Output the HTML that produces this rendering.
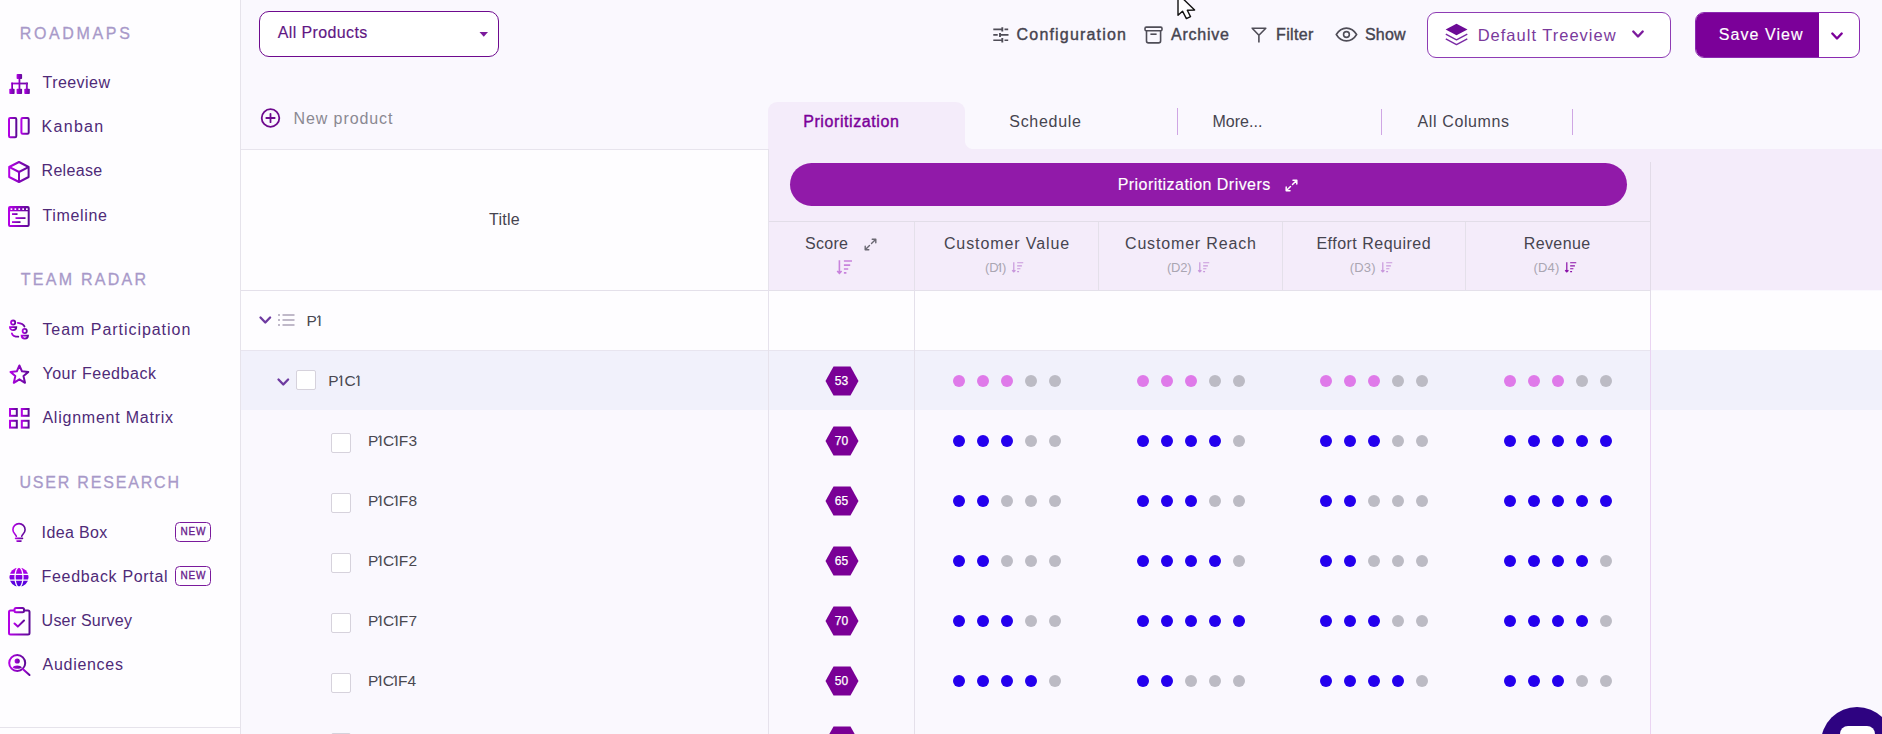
<!DOCTYPE html>
<html><head><meta charset="utf-8">
<style>
html,body{margin:0;padding:0;width:1882px;height:734px;overflow:hidden;}
body{background:#faf8fe;font-family:"Liberation Sans",sans-serif;position:relative;}
.a{position:absolute;}
.t{position:absolute;white-space:nowrap;line-height:1;font-family:"Liberation Sans",sans-serif;}
svg{position:absolute;overflow:visible;}
.hl{position:absolute;height:1px;background:#e7e4ed;}
.vl{position:absolute;width:1px;background:#e5e2ea;}
.cb{position:absolute;width:18px;height:18px;border:1px solid #d6d2dc;border-radius:2px;background:#fff;}
.one{position:relative;}
.one::before{content:'';position:absolute;left:-0.5px;top:0.27em;width:2.9px;height:1.3px;background:currentColor;transform:rotate(-45deg);}
.dot{position:absolute;width:12px;height:12px;border-radius:50%;}
</style></head><body>
<svg width="0" height="0" style="position:absolute">
<defs>
<linearGradient id="g" x1="0" y1="0" x2="1" y2="0"><stop offset="0" stop-color="#b400e6"/><stop offset="1" stop-color="#5e0a96"/></linearGradient>
<linearGradient id="gv" x1="0" y1="0" x2="0" y2="1"><stop offset="0" stop-color="#c400e6"/><stop offset="1" stop-color="#4200dc"/></linearGradient>
</defs></svg>

<!-- sidebar -->
<div class="a" style="left:0;top:0;width:240px;height:734px;background:#fefdff;"></div>
<div class="vl" style="left:240px;top:0;height:734px;background:#e6e3eb;"></div>
<div class="hl" style="left:0;top:727px;width:240px;background:#e6e3eb;"></div>

<!-- Treeview icon -->
<svg style="left:9px;top:74px" width="21" height="20" viewBox="0 0 21 20">
<g fill="url(#g)"><rect x="7.6" y="0" width="5.5" height="5" rx="0.8"/><rect x="0.3" y="14.7" width="5.3" height="5.3" rx="0.8"/><rect x="7.6" y="14.7" width="5.5" height="5.3" rx="0.8"/><rect x="15.3" y="14.7" width="5.5" height="5.3" rx="0.8"/>
<rect x="9.5" y="4" width="1.8" height="11"/><rect x="2.2" y="8.6" width="16.6" height="1.8"/><rect x="2.2" y="8.6" width="1.8" height="7"/><rect x="16.9" y="8.6" width="1.8" height="7"/></g>
</svg>
<!-- Kanban icon -->
<svg style="left:8px;top:117px" width="22" height="22" viewBox="0 0 22 22">
<g fill="none" stroke="url(#g)" stroke-width="2"><rect x="1" y="1" width="7.3" height="19.3" rx="1.2"/><rect x="13.4" y="1" width="7.3" height="15.7" rx="1.2"/></g>
</svg>
<!-- Release cube -->
<svg style="left:8px;top:161px" width="22" height="22" viewBox="0 0 22 22">
<g fill="none" stroke="url(#g)" stroke-width="2" stroke-linejoin="round"><path d="M11 1 L20.6 6 V16 L11 21 L1.2 16 V6 Z"/><path d="M1.5 6.2 L11 11 L20.4 6.2 M11 11 V20.6"/></g>
</svg>
<!-- Timeline -->
<svg style="left:8px;top:206px" width="22" height="21" viewBox="0 0 22 21">
<g fill="none" stroke="url(#g)" stroke-width="2"><rect x="1" y="1" width="19.7" height="19" rx="1"/></g>
<g fill="url(#g)"><rect x="1" y="1" width="19.7" height="4.3"/><rect x="4" y="7.2" width="5.5" height="1.8"/><rect x="7.5" y="11.2" width="10" height="1.8"/><rect x="4" y="15.2" width="8.5" height="1.8"/></g>
<g fill="#fefdff"><rect x="2.6" y="2.3" width="1.7" height="1.7"/><rect x="6.5" y="2.3" width="1.7" height="1.7"/><rect x="10.4" y="2.3" width="1.7" height="1.7"/><rect x="14.3" y="2.3" width="1.7" height="1.7"/><rect x="18" y="2.3" width="1.7" height="1.7"/></g>
</svg>
<!-- Team participation -->
<svg style="left:4px;top:310px" width="30" height="35" viewBox="0 0 30 35">
<g fill="none" stroke="url(#g)" stroke-width="1.8" stroke-linecap="round"><circle cx="9.1" cy="12.6" r="2.1"/><path d="M5.9 17.1 H12.3 C12.3 19.1 10.6 20.1 9.1 20.1 C7.6 20.1 5.9 19.1 5.9 17.1 Z"/><circle cx="20.7" cy="21" r="2.1"/><path d="M17.6 25.6 H24 C24 27.6 22.3 28.6 20.8 28.6 C19.3 28.6 17.6 27.6 17.6 25.6Z"/><path d="M13.8 12.9 C16.5 13.2 19.5 14.5 20.5 16.5"/><path d="M7.9 23.4 C8.5 25.5 11 26.7 14.3 26.7"/></g>
</svg>
<!-- Star -->
<svg style="left:9px;top:364px" width="21" height="21" viewBox="0 0 21 21">
<path fill="none" stroke="url(#g)" stroke-width="2" stroke-linejoin="round" d="M10.4 1.5 L13 7.3 L19.3 7.9 L14.5 12.1 L16 18.8 L10.4 15.3 L4.8 18.8 L6.3 12.1 L1.5 7.9 L7.8 7.3 Z"/>
</svg>
<!-- Grid -->
<svg style="left:9px;top:408px" width="21" height="21" viewBox="0 0 21 21">
<g fill="none" stroke="url(#g)" stroke-width="2"><rect x="1" y="1" width="6.8" height="6.8"/><rect x="12.8" y="1" width="6.8" height="6.8"/><rect x="1" y="12.8" width="6.8" height="6.8"/><rect x="12.8" y="12.8" width="6.8" height="6.8"/></g>
</svg>
<!-- Bulb -->
<svg style="left:6px;top:520px" width="28" height="26" viewBox="0 0 28 26">
<g fill="none" stroke="url(#g)" stroke-width="1.6" stroke-linecap="round"><path d="M10.3 16.2 C9.6 14.4 6.9 13 6.9 9.7 A6.1 6.1 0 0 1 19.1 9.7 C19.1 13 16.4 14.4 15.7 16.2"/><path d="M9.6 18.4 H16.5 M11 21.1 H15"/></g>
</svg>
<!-- Globe -->
<svg style="left:6px;top:564px" width="26" height="26" viewBox="0 0 26 26">
<circle cx="13" cy="13.1" r="9.6" fill="url(#gv)"/>
<g fill="none" stroke="#fefdff" stroke-width="1.3"><ellipse cx="13" cy="13.1" rx="4" ry="10"/><path d="M2 10.3 H24 M2 16.1 H24"/></g>
</svg>
<!-- Clipboard -->
<svg style="left:8px;top:607px" width="23" height="29" viewBox="0 0 23 29">
<g fill="none" stroke="url(#g)" stroke-width="2" stroke-linejoin="round"><rect x="1" y="3.5" width="20.5" height="24" rx="1.5"/><rect x="6.5" y="1" width="9.5" height="4.3" rx="1.5" fill="#fefdff"/><path d="M6.5 16.5 L9.8 19.6 L16 13.5" stroke-linecap="round"/></g>
</svg>
<!-- Audiences -->
<svg style="left:8px;top:654px" width="23" height="22" viewBox="0 0 23 22">
<g fill="none" stroke="url(#g)" stroke-width="2"><circle cx="9.2" cy="9" r="8"/><path d="M15 15.2 L21.5 21" stroke-linecap="round"/></g>
<g fill="url(#g)"><circle cx="9.2" cy="7" r="2.6"/><path d="M4.5 13.5 C5.5 10.8 12.9 10.8 13.9 13.5 C12.5 15.2 6 15.2 4.5 13.5Z"/></g>
</svg>
<!-- NEW badges -->
<div class="a" style="left:175px;top:522px;width:33.5px;height:17.5px;border:1.3px solid #7a1a9c;border-radius:4.5px;"></div>
<div class="t" style="left:180.5px;top:527px;font-size:10px;font-weight:400;color:#681a8c;letter-spacing:0.8px;-webkit-text-stroke:0.3px #681a8c;">NEW</div>
<div class="a" style="left:175px;top:566px;width:33.5px;height:17.5px;border:1.3px solid #7a1a9c;border-radius:4.5px;"></div>
<div class="t" style="left:180.5px;top:571px;font-size:10px;font-weight:400;color:#681a8c;letter-spacing:0.8px;-webkit-text-stroke:0.3px #681a8c;">NEW</div>

<!-- All products dropdown -->
<div class="a" style="left:259px;top:11px;width:238px;height:44px;border:1.5px solid #6e0a8e;border-radius:10px;background:#fff;"></div>
<svg style="left:479px;top:32px" width="10" height="5" viewBox="0 0 10 5"><path d="M0.5 0 H9 L4.75 4.8Z" fill="#7b1a9c"/></svg>

<!-- toolbar icons -->
<svg style="left:988px;top:22px" width="26" height="26" viewBox="0 0 26 26">
<g stroke="#4f4d57" stroke-width="1.6" fill="none"><path d="M5.3 7.4 H14.3 M16.5 7.4 H20.2 M5.3 12.9 H9.7 M12 12.9 H20.5 M5.3 18.2 H14.3 M16.5 18.2 H20.2"/><path d="M14.3 5.3 V9.6 M12 11 V14.9 M14.3 16.1 V20.4" stroke-width="1.9"/></g>
</svg>
<svg style="left:1140px;top:22px" width="28" height="26" viewBox="0 0 28 26">
<g fill="none" stroke="#4f4d57" stroke-width="1.6" stroke-linejoin="round"><rect x="5" y="5.1" width="17" height="3.7" rx="1.3"/><path d="M6.5 8.8 V19 Q6.5 20.9 8.5 20.9 H18.6 Q20.6 20.9 20.6 19 V8.8"/><path d="M10.4 12.2 H16.6"/></g>
</svg>
<svg style="left:1246px;top:22px" width="26" height="26" viewBox="0 0 26 26">
<g fill="none" stroke="#4f4d57" stroke-width="1.6" stroke-linejoin="round"><path d="M6.2 6.2 H19.8 L12.9 13.3 Z M12.9 13.3 V20.4"/></g>
</svg>
<svg style="left:1332px;top:22px" width="28" height="26" viewBox="0 0 28 26">
<g fill="none" stroke="#4f4d57" stroke-width="1.6"><path d="M4.3 12.5 C7.5 7.2 10.8 6.1 14.45 6.1 C18.1 6.1 21.4 7.2 24.6 12.5 C21.4 17.8 18.1 18.9 14.45 18.9 C10.8 18.9 7.5 17.8 4.3 12.5Z"/><circle cx="14.45" cy="12.5" r="2.9"/></g>
</svg>

<!-- cursor -->
<svg style="left:1177px;top:-7px" width="20" height="28" viewBox="0 0 20 28">
<path d="M1 0.8 L1 22.3 L5.5 18.2 L9.4 25.6 L13.5 23.6 L10.3 17.3 L17.6 17.1 Z" fill="#fff" stroke="#111" stroke-width="1.4" stroke-linejoin="round"/>
</svg>

<!-- Default Treeview -->
<div class="a" style="left:1427px;top:12px;width:242px;height:44px;border:1.2px solid #8e3cb4;border-radius:9px;background:#fff;"></div>
<svg style="left:1445px;top:23px" width="24" height="23" viewBox="0 0 24 23">
<path d="M11.5 0.8 L22.5 6.5 L11.5 12.2 L0.6 6.5 Z" fill="#6c0a96"/>
<g fill="none" stroke="#7a2aa4" stroke-width="1.4" stroke-linejoin="round"><path d="M0.8 11.2 L11.5 16.8 L22.3 11.2"/><path d="M0.8 15.8 L11.5 21.6 L22.3 15.8"/></g>
</svg>
<svg style="left:1632px;top:30px" width="12" height="9" viewBox="0 0 12 9">
<path d="M1.3 1.5 L6 6.5 L10.7 1.5" fill="none" stroke="#7b1a9c" stroke-width="2.4" stroke-linecap="round" stroke-linejoin="round"/>
</svg>

<!-- Save view -->
<div class="a" style="left:1695px;top:12px;width:163px;height:44px;border:1.2px solid #8a2ab0;border-radius:9px;background:#fff;overflow:hidden;">
<div class="a" style="left:0;top:0;width:123px;height:44px;background:#7b0099;"></div>
</div>
<svg style="left:1831px;top:32px" width="12" height="9" viewBox="0 0 12 9">
<path d="M1.3 1.5 L6 6.5 L10.7 1.5" fill="none" stroke="#7b0099" stroke-width="2.4" stroke-linecap="round" stroke-linejoin="round"/>
</svg>

<!-- New product -->
<svg style="left:260px;top:108px" width="21" height="21" viewBox="0 0 21 21">
<g fill="none" stroke="#6e0a8e" stroke-width="1.8" stroke-linecap="round"><circle cx="10.5" cy="10" r="8.8"/><path d="M10.5 5.8 V14.2 M6.3 10 H14.7"/></g>
</svg>

<!-- title column header area -->
<div class="a" style="left:241px;top:149px;width:527px;height:141px;background:#fefdff;"></div>
<div class="hl" style="left:241px;top:149px;width:527px;"></div>

<!-- tabs -->
<div class="a" style="left:768px;top:102px;width:197px;height:60px;background:#f4ecfa;border-radius:9px 9px 0 0;"></div>
<div class="a" style="left:768px;top:149px;width:1114px;height:141px;background:#f4ecfa;"></div>
<div class="a" style="left:965px;top:141px;width:8px;height:8px;background:radial-gradient(circle at 100% 0, #faf8fe 7.5px, #f4ecfa 8.5px);"></div>
<div class="vl" style="left:1177px;top:108px;height:27px;background:#cfa6e4;"></div>
<div class="vl" style="left:1381px;top:109px;height:26px;background:#cfa6e4;"></div>
<div class="vl" style="left:1572px;top:109px;height:26px;background:#cfa6e4;"></div>

<!-- pill -->
<div class="a" style="left:790px;top:163px;width:837px;height:43px;background:#911aa9;border-radius:22px;"></div>
<svg style="left:1285px;top:179px" width="13" height="13" viewBox="0 0 13 13">
<g fill="none" stroke="#fff" stroke-width="1.5" stroke-linecap="round" stroke-linejoin="round"><path d="M7.5 5.5 L11.8 1.2 M8 1.2 H11.8 V5 M5.5 7.5 L1.2 11.8 M1.2 8 V11.8 H5"/></g>
</svg>

<!-- header grid lines -->
<div class="hl" style="left:768px;top:221px;width:882px;background:#e2dde8;"></div>
<div class="vl" style="left:1650px;top:162px;height:572px;background:#e2dbe8;"></div>
<div class="vl" style="left:768px;top:149px;height:585px;background:#e6e2ec;"></div>
<div class="vl" style="left:914px;top:222px;height:512px;background:#e4e0ea;"></div>
<div class="vl" style="left:1098px;top:222px;height:68px;background:#e4e0ea;"></div>
<div class="vl" style="left:1282px;top:222px;height:68px;background:#e4e0ea;"></div>
<div class="vl" style="left:1465px;top:222px;height:68px;background:#e4e0ea;"></div>

<!-- header icons -->
<svg style="left:864px;top:238px" width="13" height="13" viewBox="0 0 13 13">
<g fill="none" stroke="#6a6872" stroke-width="1.4" stroke-linecap="round" stroke-linejoin="round"><path d="M7.5 5.5 L11.8 1.2 M8.2 1.2 H11.8 V4.8 M5.5 7.5 L1.2 11.8 M1.2 8.2 V11.8 H4.8"/></g>
</svg>
<svg style="left:837px;top:260px" width="16" height="14" viewBox="0 0 16 14"><g fill="none" stroke="#c882dc" stroke-width="1.6" stroke-linecap="butt"><path d="M2.4 0.3 V13.3 M0.2 11 L2.4 13.3 L4.6 11 M6.9 1 H15 M6.9 5.1 H13.2 M6.9 9 H11.2 M6.9 12.9 H9.4"/></g></svg>
<svg style="left:1012px;top:262px" width="12" height="10.5" viewBox="0 0 16 14"><g fill="none" stroke="#c898dc" stroke-width="1.6" stroke-linecap="butt"><path d="M2.4 0.3 V13.3 M0.2 11 L2.4 13.3 L4.6 11 M6.9 1 H15 M6.9 5.1 H13.2 M6.9 9 H11.2 M6.9 12.9 H9.4"/></g></svg>
<svg style="left:1198px;top:262px" width="12" height="10.5" viewBox="0 0 16 14"><g fill="none" stroke="#c898dc" stroke-width="1.6" stroke-linecap="butt"><path d="M2.4 0.3 V13.3 M0.2 11 L2.4 13.3 L4.6 11 M6.9 1 H15 M6.9 5.1 H13.2 M6.9 9 H11.2 M6.9 12.9 H9.4"/></g></svg>
<svg style="left:1381px;top:262px" width="12" height="10.5" viewBox="0 0 16 14"><g fill="none" stroke="#c898dc" stroke-width="1.6" stroke-linecap="butt"><path d="M2.4 0.3 V13.3 M0.2 11 L2.4 13.3 L4.6 11 M6.9 1 H15 M6.9 5.1 H13.2 M6.9 9 H11.2 M6.9 12.9 H9.4"/></g></svg>
<svg style="left:1565px;top:262px" width="12" height="10.5" viewBox="0 0 16 14"><g fill="none" stroke="#8a10a8" stroke-width="1.6" stroke-linecap="butt"><path d="M2.4 0.3 V13.3 M0.2 11 L2.4 13.3 L4.6 11 M6.9 1 H15 M6.9 5.1 H13.2 M6.9 9 H11.2 M6.9 12.9 H9.4"/></g></svg>

<!-- rows -->
<div class="hl" style="left:241px;top:290px;width:1409px;background:#e4e0ea;"></div>
<div class="a" style="left:241px;top:291px;width:1641px;height:59px;background:#fefdff;"></div>
<div class="a" style="left:241px;top:350px;width:1641px;height:60px;background:#f1f1fb;"></div>
<div class="hl" style="left:241px;top:350px;width:1409px;background:#e8e5ef;"></div>
<!-- redraw vertical lines over rows -->
<div class="vl" style="left:768px;top:290px;height:444px;background:#e6e2ec;"></div>
<div class="vl" style="left:914px;top:290px;height:444px;background:#e4e0ea;"></div>
<div class="vl" style="left:1650px;top:291px;height:14px;background:#e2dde8;"></div><div class="vl" style="left:1650px;top:305px;height:429px;background:#ead4f2;"></div>

<!-- P1 row -->
<svg style="left:259px;top:316px" width="13" height="9" viewBox="0 0 13 9">
<path d="M1.5 1.5 L6.3 6.5 L11.1 1.5" fill="none" stroke="#6e3aa0" stroke-width="2.3" stroke-linecap="round" stroke-linejoin="round"/>
</svg>
<svg style="left:278px;top:314px" width="18" height="13" viewBox="0 0 18 13">
<g stroke="#c0b9c9" stroke-width="1.8"><path d="M0 1 H2 M0 6 H2 M0 11 H2 M4.5 1 H16.5 M4.5 6 H16.5 M4.5 11 H16.5"/></g>
</svg>
<!-- P1C1 row -->
<svg style="left:277px;top:378px" width="13" height="9" viewBox="0 0 13 9">
<path d="M1.5 1.5 L6.3 6.5 L11.1 1.5" fill="none" stroke="#6e3aa0" stroke-width="2.3" stroke-linecap="round" stroke-linejoin="round"/>
</svg>
<div class="cb" style="left:296px;top:370px;"></div>
<svg style="left:824.5px;top:366px" width="34" height="30" viewBox="0 0 34 30"><polygon points="0.5,15.0 8.5,0.4 25.5,0.4 33.5,15.0 25.5,29.6 8.5,29.6" fill="#7a0096"/></svg>
<div class="t" style="left:821.5px;width:40px;text-align:center;top:375.4px;font-size:12px;color:#fff;-webkit-text-stroke:0.25px #fff;">53</div>
<div class="dot" style="left:953px;top:375px;background:#df7ae9;"></div>
<div class="dot" style="left:977px;top:375px;background:#df7ae9;"></div>
<div class="dot" style="left:1001px;top:375px;background:#df7ae9;"></div>
<div class="dot" style="left:1025px;top:375px;background:#bcbbc4;"></div>
<div class="dot" style="left:1049px;top:375px;background:#bcbbc4;"></div>
<div class="dot" style="left:1137px;top:375px;background:#df7ae9;"></div>
<div class="dot" style="left:1161px;top:375px;background:#df7ae9;"></div>
<div class="dot" style="left:1185px;top:375px;background:#df7ae9;"></div>
<div class="dot" style="left:1209px;top:375px;background:#bcbbc4;"></div>
<div class="dot" style="left:1233px;top:375px;background:#bcbbc4;"></div>
<div class="dot" style="left:1320px;top:375px;background:#df7ae9;"></div>
<div class="dot" style="left:1344px;top:375px;background:#df7ae9;"></div>
<div class="dot" style="left:1368px;top:375px;background:#df7ae9;"></div>
<div class="dot" style="left:1392px;top:375px;background:#bcbbc4;"></div>
<div class="dot" style="left:1416px;top:375px;background:#bcbbc4;"></div>
<div class="dot" style="left:1504px;top:375px;background:#df7ae9;"></div>
<div class="dot" style="left:1528px;top:375px;background:#df7ae9;"></div>
<div class="dot" style="left:1552px;top:375px;background:#df7ae9;"></div>
<div class="dot" style="left:1576px;top:375px;background:#bcbbc4;"></div>
<div class="dot" style="left:1600px;top:375px;background:#bcbbc4;"></div>
<svg style="left:824.5px;top:426px" width="34" height="30" viewBox="0 0 34 30"><polygon points="0.5,15.0 8.5,0.4 25.5,0.4 33.5,15.0 25.5,29.6 8.5,29.6" fill="#7a0096"/></svg>
<div class="t" style="left:821.5px;width:40px;text-align:center;top:435.4px;font-size:12px;color:#fff;-webkit-text-stroke:0.25px #fff;">70</div>
<div class="cb" style="left:331px;top:433px;"></div>
<div class="dot" style="left:953px;top:435px;background:#2400ee;"></div>
<div class="dot" style="left:977px;top:435px;background:#2400ee;"></div>
<div class="dot" style="left:1001px;top:435px;background:#2400ee;"></div>
<div class="dot" style="left:1025px;top:435px;background:#bcbbc4;"></div>
<div class="dot" style="left:1049px;top:435px;background:#bcbbc4;"></div>
<div class="dot" style="left:1137px;top:435px;background:#2400ee;"></div>
<div class="dot" style="left:1161px;top:435px;background:#2400ee;"></div>
<div class="dot" style="left:1185px;top:435px;background:#2400ee;"></div>
<div class="dot" style="left:1209px;top:435px;background:#2400ee;"></div>
<div class="dot" style="left:1233px;top:435px;background:#bcbbc4;"></div>
<div class="dot" style="left:1320px;top:435px;background:#2400ee;"></div>
<div class="dot" style="left:1344px;top:435px;background:#2400ee;"></div>
<div class="dot" style="left:1368px;top:435px;background:#2400ee;"></div>
<div class="dot" style="left:1392px;top:435px;background:#bcbbc4;"></div>
<div class="dot" style="left:1416px;top:435px;background:#bcbbc4;"></div>
<div class="dot" style="left:1504px;top:435px;background:#2400ee;"></div>
<div class="dot" style="left:1528px;top:435px;background:#2400ee;"></div>
<div class="dot" style="left:1552px;top:435px;background:#2400ee;"></div>
<div class="dot" style="left:1576px;top:435px;background:#2400ee;"></div>
<div class="dot" style="left:1600px;top:435px;background:#2400ee;"></div>
<svg style="left:824.5px;top:486px" width="34" height="30" viewBox="0 0 34 30"><polygon points="0.5,15.0 8.5,0.4 25.5,0.4 33.5,15.0 25.5,29.6 8.5,29.6" fill="#7a0096"/></svg>
<div class="t" style="left:821.5px;width:40px;text-align:center;top:495.4px;font-size:12px;color:#fff;-webkit-text-stroke:0.25px #fff;">65</div>
<div class="cb" style="left:331px;top:493px;"></div>
<div class="dot" style="left:953px;top:495px;background:#2400ee;"></div>
<div class="dot" style="left:977px;top:495px;background:#2400ee;"></div>
<div class="dot" style="left:1001px;top:495px;background:#bcbbc4;"></div>
<div class="dot" style="left:1025px;top:495px;background:#bcbbc4;"></div>
<div class="dot" style="left:1049px;top:495px;background:#bcbbc4;"></div>
<div class="dot" style="left:1137px;top:495px;background:#2400ee;"></div>
<div class="dot" style="left:1161px;top:495px;background:#2400ee;"></div>
<div class="dot" style="left:1185px;top:495px;background:#2400ee;"></div>
<div class="dot" style="left:1209px;top:495px;background:#bcbbc4;"></div>
<div class="dot" style="left:1233px;top:495px;background:#bcbbc4;"></div>
<div class="dot" style="left:1320px;top:495px;background:#2400ee;"></div>
<div class="dot" style="left:1344px;top:495px;background:#2400ee;"></div>
<div class="dot" style="left:1368px;top:495px;background:#bcbbc4;"></div>
<div class="dot" style="left:1392px;top:495px;background:#bcbbc4;"></div>
<div class="dot" style="left:1416px;top:495px;background:#bcbbc4;"></div>
<div class="dot" style="left:1504px;top:495px;background:#2400ee;"></div>
<div class="dot" style="left:1528px;top:495px;background:#2400ee;"></div>
<div class="dot" style="left:1552px;top:495px;background:#2400ee;"></div>
<div class="dot" style="left:1576px;top:495px;background:#2400ee;"></div>
<div class="dot" style="left:1600px;top:495px;background:#2400ee;"></div>
<svg style="left:824.5px;top:546px" width="34" height="30" viewBox="0 0 34 30"><polygon points="0.5,15.0 8.5,0.4 25.5,0.4 33.5,15.0 25.5,29.6 8.5,29.6" fill="#7a0096"/></svg>
<div class="t" style="left:821.5px;width:40px;text-align:center;top:555.4px;font-size:12px;color:#fff;-webkit-text-stroke:0.25px #fff;">65</div>
<div class="cb" style="left:331px;top:553px;"></div>
<div class="dot" style="left:953px;top:555px;background:#2400ee;"></div>
<div class="dot" style="left:977px;top:555px;background:#2400ee;"></div>
<div class="dot" style="left:1001px;top:555px;background:#bcbbc4;"></div>
<div class="dot" style="left:1025px;top:555px;background:#bcbbc4;"></div>
<div class="dot" style="left:1049px;top:555px;background:#bcbbc4;"></div>
<div class="dot" style="left:1137px;top:555px;background:#2400ee;"></div>
<div class="dot" style="left:1161px;top:555px;background:#2400ee;"></div>
<div class="dot" style="left:1185px;top:555px;background:#2400ee;"></div>
<div class="dot" style="left:1209px;top:555px;background:#2400ee;"></div>
<div class="dot" style="left:1233px;top:555px;background:#bcbbc4;"></div>
<div class="dot" style="left:1320px;top:555px;background:#2400ee;"></div>
<div class="dot" style="left:1344px;top:555px;background:#2400ee;"></div>
<div class="dot" style="left:1368px;top:555px;background:#bcbbc4;"></div>
<div class="dot" style="left:1392px;top:555px;background:#bcbbc4;"></div>
<div class="dot" style="left:1416px;top:555px;background:#bcbbc4;"></div>
<div class="dot" style="left:1504px;top:555px;background:#2400ee;"></div>
<div class="dot" style="left:1528px;top:555px;background:#2400ee;"></div>
<div class="dot" style="left:1552px;top:555px;background:#2400ee;"></div>
<div class="dot" style="left:1576px;top:555px;background:#2400ee;"></div>
<div class="dot" style="left:1600px;top:555px;background:#bcbbc4;"></div>
<svg style="left:824.5px;top:606px" width="34" height="30" viewBox="0 0 34 30"><polygon points="0.5,15.0 8.5,0.4 25.5,0.4 33.5,15.0 25.5,29.6 8.5,29.6" fill="#7a0096"/></svg>
<div class="t" style="left:821.5px;width:40px;text-align:center;top:615.4px;font-size:12px;color:#fff;-webkit-text-stroke:0.25px #fff;">70</div>
<div class="cb" style="left:331px;top:613px;"></div>
<div class="dot" style="left:953px;top:615px;background:#2400ee;"></div>
<div class="dot" style="left:977px;top:615px;background:#2400ee;"></div>
<div class="dot" style="left:1001px;top:615px;background:#2400ee;"></div>
<div class="dot" style="left:1025px;top:615px;background:#bcbbc4;"></div>
<div class="dot" style="left:1049px;top:615px;background:#bcbbc4;"></div>
<div class="dot" style="left:1137px;top:615px;background:#2400ee;"></div>
<div class="dot" style="left:1161px;top:615px;background:#2400ee;"></div>
<div class="dot" style="left:1185px;top:615px;background:#2400ee;"></div>
<div class="dot" style="left:1209px;top:615px;background:#2400ee;"></div>
<div class="dot" style="left:1233px;top:615px;background:#2400ee;"></div>
<div class="dot" style="left:1320px;top:615px;background:#2400ee;"></div>
<div class="dot" style="left:1344px;top:615px;background:#2400ee;"></div>
<div class="dot" style="left:1368px;top:615px;background:#2400ee;"></div>
<div class="dot" style="left:1392px;top:615px;background:#bcbbc4;"></div>
<div class="dot" style="left:1416px;top:615px;background:#bcbbc4;"></div>
<div class="dot" style="left:1504px;top:615px;background:#2400ee;"></div>
<div class="dot" style="left:1528px;top:615px;background:#2400ee;"></div>
<div class="dot" style="left:1552px;top:615px;background:#2400ee;"></div>
<div class="dot" style="left:1576px;top:615px;background:#2400ee;"></div>
<div class="dot" style="left:1600px;top:615px;background:#bcbbc4;"></div>
<svg style="left:824.5px;top:666px" width="34" height="30" viewBox="0 0 34 30"><polygon points="0.5,15.0 8.5,0.4 25.5,0.4 33.5,15.0 25.5,29.6 8.5,29.6" fill="#7a0096"/></svg>
<div class="t" style="left:821.5px;width:40px;text-align:center;top:675.4px;font-size:12px;color:#fff;-webkit-text-stroke:0.25px #fff;">50</div>
<div class="cb" style="left:331px;top:673px;"></div>
<div class="dot" style="left:953px;top:675px;background:#2400ee;"></div>
<div class="dot" style="left:977px;top:675px;background:#2400ee;"></div>
<div class="dot" style="left:1001px;top:675px;background:#2400ee;"></div>
<div class="dot" style="left:1025px;top:675px;background:#2400ee;"></div>
<div class="dot" style="left:1049px;top:675px;background:#bcbbc4;"></div>
<div class="dot" style="left:1137px;top:675px;background:#2400ee;"></div>
<div class="dot" style="left:1161px;top:675px;background:#2400ee;"></div>
<div class="dot" style="left:1185px;top:675px;background:#bcbbc4;"></div>
<div class="dot" style="left:1209px;top:675px;background:#bcbbc4;"></div>
<div class="dot" style="left:1233px;top:675px;background:#bcbbc4;"></div>
<div class="dot" style="left:1320px;top:675px;background:#2400ee;"></div>
<div class="dot" style="left:1344px;top:675px;background:#2400ee;"></div>
<div class="dot" style="left:1368px;top:675px;background:#2400ee;"></div>
<div class="dot" style="left:1392px;top:675px;background:#2400ee;"></div>
<div class="dot" style="left:1416px;top:675px;background:#bcbbc4;"></div>
<div class="dot" style="left:1504px;top:675px;background:#2400ee;"></div>
<div class="dot" style="left:1528px;top:675px;background:#2400ee;"></div>
<div class="dot" style="left:1552px;top:675px;background:#2400ee;"></div>
<div class="dot" style="left:1576px;top:675px;background:#bcbbc4;"></div>
<div class="dot" style="left:1600px;top:675px;background:#bcbbc4;"></div>
<svg style="left:824.5px;top:726px" width="34" height="30" viewBox="0 0 34 30"><polygon points="0.5,15.0 8.5,0.4 25.5,0.4 33.5,15.0 25.5,29.6 8.5,29.6" fill="#7a0096"/></svg>
<div class="cb" style="left:331px;top:733px;"></div>

<!-- chat widget -->
<div class="a" style="left:1821px;top:707px;width:72px;height:72px;border-radius:50%;background:#2e0381;"></div>
<div class="a" style="left:1840px;top:726px;width:35px;height:30px;border-radius:8px;background:#fff;"></div>

<div class="t" style="left:19.70px;top:26.00px;font-size:16px;font-weight:400;color:#a899c9;letter-spacing:2.657px;-webkit-text-stroke:0.3px #a899c9;">ROADMAPS</div>
<div class="t" style="left:42.50px;top:75.00px;font-size:16px;font-weight:400;color:#4f2a78;letter-spacing:0.449px;">Treeview</div>
<div class="t" style="left:41.50px;top:119.00px;font-size:16px;font-weight:400;color:#4f2a78;letter-spacing:1.307px;">Kanban</div>
<div class="t" style="left:41.50px;top:163.00px;font-size:16px;font-weight:400;color:#4f2a78;letter-spacing:0.333px;">Release</div>
<div class="t" style="left:42.50px;top:208.00px;font-size:16px;font-weight:400;color:#4f2a78;letter-spacing:0.647px;">Timeline</div>
<div class="t" style="left:20.80px;top:272.00px;font-size:16px;font-weight:400;color:#a899c9;letter-spacing:2.251px;-webkit-text-stroke:0.3px #a899c9;">TEAM RADAR</div>
<div class="t" style="left:42.40px;top:322.00px;font-size:16px;font-weight:400;color:#4f2a78;letter-spacing:0.958px;">Team Participation</div>
<div class="t" style="left:42.40px;top:366.00px;font-size:16px;font-weight:400;color:#4f2a78;letter-spacing:0.547px;">Your Feedback</div>
<div class="t" style="left:42.40px;top:410.00px;font-size:16px;font-weight:400;color:#4f2a78;letter-spacing:0.770px;">Alignment Matrix</div>
<div class="t" style="left:19.40px;top:475.00px;font-size:16px;font-weight:400;color:#a899c9;letter-spacing:1.812px;-webkit-text-stroke:0.3px #a899c9;">USER RESEARCH</div>
<div class="t" style="left:41.60px;top:525.00px;font-size:16px;font-weight:400;color:#4f2a78;letter-spacing:0.363px;">Idea Box</div>
<div class="t" style="left:41.60px;top:569.00px;font-size:16px;font-weight:400;color:#4f2a78;letter-spacing:0.675px;">Feedback Portal</div>
<div class="t" style="left:41.60px;top:613.00px;font-size:16px;font-weight:400;color:#4f2a78;letter-spacing:0.228px;">User Survey</div>
<div class="t" style="left:42.60px;top:657.00px;font-size:16px;font-weight:400;color:#4f2a78;letter-spacing:0.698px;">Audiences</div>
<div class="t" style="left:277.80px;top:25.00px;font-size:16px;font-weight:400;color:#5f1784;letter-spacing:0.367px;-webkit-text-stroke:0.15px #5f1784;">All Products</div>
<div class="t" style="left:293.50px;top:111.00px;font-size:16px;font-weight:400;color:#8a8892;letter-spacing:0.912px;">New product</div>
<div class="t" style="left:1016.60px;top:27.00px;font-size:16px;font-weight:400;color:#46444f;letter-spacing:1.177px;-webkit-text-stroke:0.4px #46444f;">Configuration</div>
<div class="t" style="left:1171.00px;top:27.00px;font-size:16px;font-weight:400;color:#46444f;letter-spacing:0.758px;-webkit-text-stroke:0.4px #46444f;">Archive</div>
<div class="t" style="left:1276.00px;top:27.00px;font-size:16px;font-weight:400;color:#46444f;letter-spacing:0.355px;-webkit-text-stroke:0.4px #46444f;">Filter</div>
<div class="t" style="left:1365.00px;top:27.00px;font-size:16px;font-weight:400;color:#46444f;letter-spacing:0.177px;-webkit-text-stroke:0.4px #46444f;">Show</div>
<div class="t" style="left:1477.70px;top:27.00px;font-size:16.5px;font-weight:400;color:#7a3a9c;letter-spacing:1.002px;">Default Treeview</div>
<div class="t" style="left:1718.80px;top:27.00px;font-size:16px;font-weight:400;color:#ffffff;letter-spacing:1.056px;-webkit-text-stroke:0.15px #ffffff;">Save View</div>
<div class="t" style="left:803.20px;top:114.00px;font-size:16px;font-weight:400;color:#7b0099;letter-spacing:0.590px;-webkit-text-stroke:0.4px #7b0099;">Prioritization</div>
<div class="t" style="left:1009.30px;top:114.00px;font-size:16px;font-weight:400;color:#46444f;letter-spacing:0.697px;">Schedule</div>
<div class="t" style="left:1212.40px;top:114.00px;font-size:16px;font-weight:400;color:#46444f;letter-spacing:0.043px;">More...</div>
<div class="t" style="left:1417.60px;top:114.00px;font-size:16px;font-weight:400;color:#46444f;letter-spacing:0.604px;">All Columns</div>
<div class="t" style="left:1117.70px;top:177.00px;font-size:16px;font-weight:400;color:#ffffff;letter-spacing:0.446px;-webkit-text-stroke:0.15px #ffffff;">Prioritization Drivers</div>
<div class="t" style="left:489.10px;top:212.00px;font-size:16px;font-weight:400;color:#46444f;letter-spacing:0.216px;">Title</div>
<div class="t" style="left:805.00px;top:236.00px;font-size:16px;font-weight:400;color:#46444f;letter-spacing:0.275px;">Score</div>
<div class="t" style="left:943.90px;top:236.00px;font-size:16px;font-weight:400;color:#46444f;letter-spacing:0.897px;">Customer Value</div>
<div class="t" style="left:1125.00px;top:236.00px;font-size:16px;font-weight:400;color:#46444f;letter-spacing:0.835px;">Customer Reach</div>
<div class="t" style="left:1316.40px;top:236.00px;font-size:16px;font-weight:400;color:#46444f;letter-spacing:0.491px;">Effort Required</div>
<div class="t" style="left:1523.70px;top:236.00px;font-size:16px;font-weight:400;color:#46444f;letter-spacing:0.409px;">Revenue</div>
<div class="t" style="left:985.00px;top:261.00px;font-size:13px;font-weight:400;color:#aaa6b2;letter-spacing:-0.110px;">(D<span class="one">I</span>)</div>
<div class="t" style="left:1166.90px;top:261.00px;font-size:13px;font-weight:400;color:#aaa6b2;letter-spacing:-0.182px;">(D2)</div>
<div class="t" style="left:1349.70px;top:261.00px;font-size:13px;font-weight:400;color:#aaa6b2;letter-spacing:0.218px;">(D3)</div>
<div class="t" style="left:1533.40px;top:261.00px;font-size:13px;font-weight:400;color:#aaa6b2;letter-spacing:0.218px;">(D4)</div>
<div class="t" style="left:306.60px;top:313.00px;font-size:15.5px;font-weight:400;color:#4a4850;letter-spacing:0.562px;">P<span class="one">I</span></div>
<div class="t" style="left:328.20px;top:373.00px;font-size:15.5px;font-weight:400;color:#4a4850;letter-spacing:0.787px;">P<span class="one">I</span>C<span class="one">I</span></div>
<div class="t" style="left:368.00px;top:433.00px;font-size:15.5px;font-weight:400;color:#4a4850;letter-spacing:0.177px;">P<span class="one">I</span>C<span class="one">I</span>F3</div>
<div class="t" style="left:368.00px;top:493.00px;font-size:15.5px;font-weight:400;color:#4a4850;letter-spacing:0.177px;">P<span class="one">I</span>C<span class="one">I</span>F8</div>
<div class="t" style="left:368.00px;top:553.00px;font-size:15.5px;font-weight:400;color:#4a4850;letter-spacing:0.177px;">P<span class="one">I</span>C<span class="one">I</span>F2</div>
<div class="t" style="left:368.00px;top:613.00px;font-size:15.5px;font-weight:400;color:#4a4850;letter-spacing:0.177px;">P<span class="one">I</span>C<span class="one">I</span>F7</div>
<div class="t" style="left:368.00px;top:673.00px;font-size:15.5px;font-weight:400;color:#4a4850;letter-spacing:-0.023px;">P<span class="one">I</span>C<span class="one">I</span>F4</div>
</body></html>
